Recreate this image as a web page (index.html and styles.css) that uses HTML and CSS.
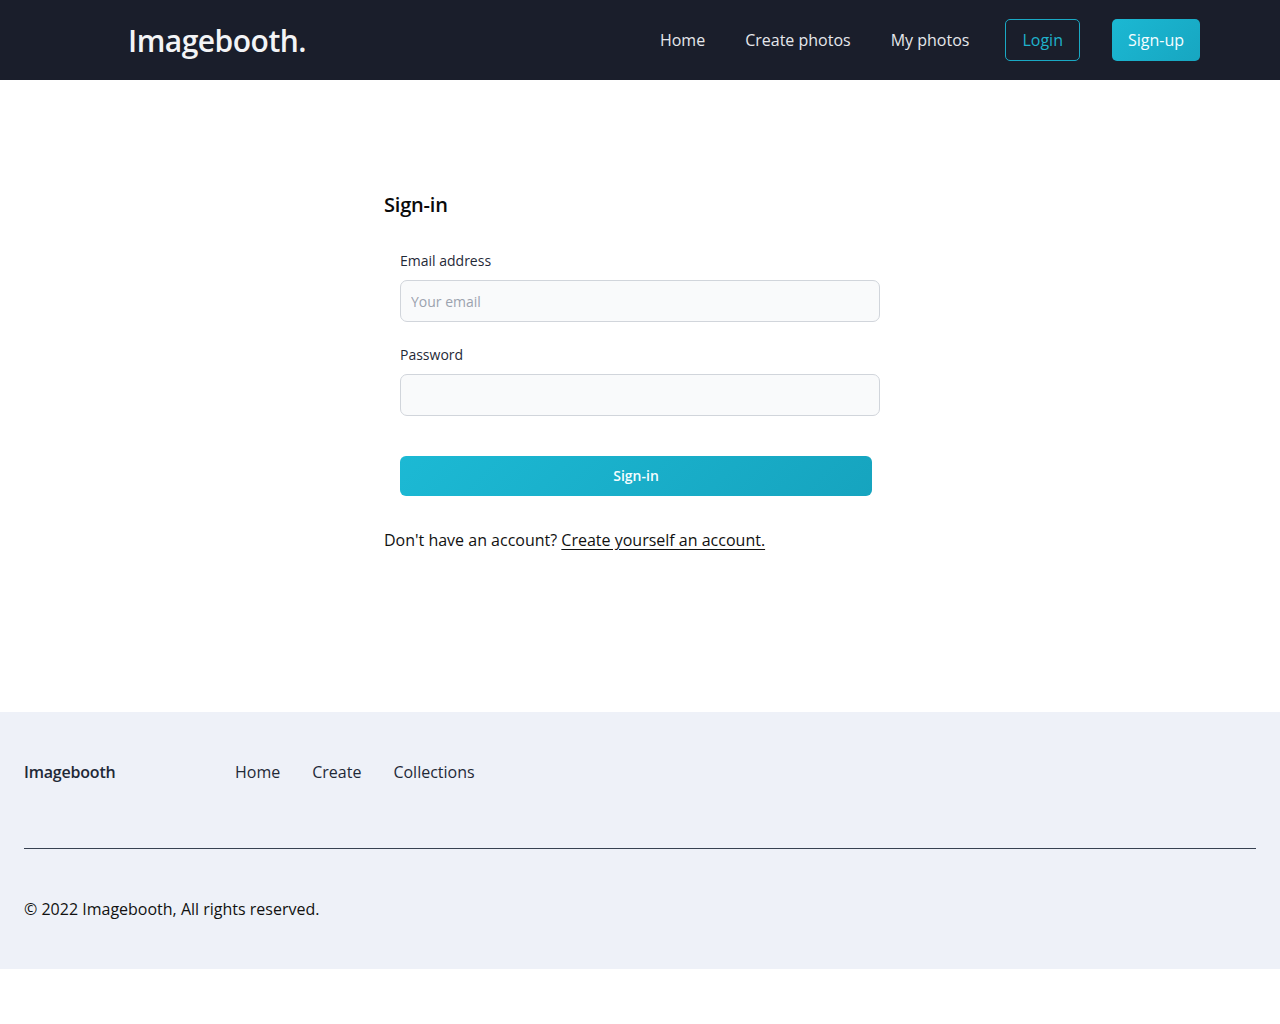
FILE: index.html
```html
<!DOCTYPE html>
<html lang="en">
<head>
  <meta charset="UTF-8">
  <meta name="viewport" content="width=device-width, initial-scale=1.0">
  <title>Imagebooth - Sign-in</title>
  <link rel="stylesheet" href="styles.css">
</head>
<body>
  <header class="navbar">
    <a class="brand" href="#">Imagebooth.</a>
    <nav class="nav-links">
      <a href="#">Home</a>
      <a href="#">Create photos</a>
      <a href="#">My photos</a>
    </nav>
    <div class="nav-actions">
      <a class="btn-outline" href="#">Login</a>
      <a class="btn-solid" href="#">Sign-up</a>
    </div>
  </header>

  <main class="main">
    <div class="signin">
      <h1 class="title">Sign-in</h1>
      <form class="form">
        <div class="field">
          <label for="email">Email address</label>
          <input id="email" type="email" placeholder="Your email">
        </div>
        <div class="field">
          <label for="password">Password</label>
          <input id="password" type="password">
        </div>
        <button class="btn-submit" type="button">Sign-in</button>
      </form>
      <p class="register">Don't have an account? <a href="#">Create yourself an account.</a></p>
    </div>
  </main>

  <footer class="footer">
    <div class="footer-top">
      <div class="footer-brand">Imagebooth</div>
      <nav class="footer-links">
        <a href="#">Home</a>
        <a href="#">Create</a>
        <a href="#">Collections</a>
      </nav>
    </div>
    <hr class="footer-line">
    <p class="copyright">© 2022 Imagebooth, All rights reserved.</p>
  </footer>
</body>
</html>
```

FILE: styles.css
```css
* {
  box-sizing: border-box;
}
body {
  margin: 0;
  font-family: "Open Sans", "Noto Sans", Arial, sans-serif;
  color: #111;
  background: #fff;
}
a {
  text-decoration: none;
  color: inherit;
}

/* header */
.navbar {
  height: 80px;
  background: #1a1e2b;
  display: flex;
  align-items: center;
  padding: 0 80px 0 128px;
}
.brand {
  font-size: 30px;
  font-weight: 600;
  color: #f3f4f6;
  letter-spacing: -0.5px;
}
.nav-links {
  margin-left: auto;
  display: flex;
  gap: 40px;
}
.nav-links a {
  font-size: 16px;
  color: #e5e7eb;
}
.nav-actions {
  display: flex;
  gap: 32px;
  margin-left: 36px;
}
.btn-outline,
.btn-solid {
  height: 42px;
  display: flex;
  align-items: center;
  padding: 0 16px;
  border-radius: 5px;
  font-size: 16px;
}
.btn-outline {
  border: 1px solid #1aa9c4;
  color: #1fb2cc;
}
.btn-solid {
  background: linear-gradient(135deg, #1bb8d3, #17a6c1);
  color: #f5fdff;
}

/* sign-in */
.main {
  padding: 111px 0 160px;
}
.signin {
  width: 512px;
  margin-left: 384px;
}
.title {
  margin: 0 0 32px;
  font-size: 20px;
  line-height: 28px;
  font-weight: 600;
  color: #0a0a0a;
  letter-spacing: -0.2px;
}
.form {
  padding: 0 16px;
}
.field {
  margin-bottom: 23px;
}
.field label {
  display: block;
  font-size: 14px;
  line-height: 20px;
  margin-bottom: 9px;
  color: #1f2937;
}
.field input {
  width: 480px;
  height: 42px;
  border: 1px solid #d1d5db;
  border-radius: 7px;
  background: #f9fafb;
  padding: 0 10px;
  font-family: inherit;
  font-size: 14px;
  color: #111;
}
.field input::placeholder {
  color: #9ca3af;
}
.btn-submit {
  display: block;
  width: 472px;
  height: 40px;
  margin-top: 40px;
  border: 0;
  border-radius: 6px;
  background: linear-gradient(135deg, #1cb9d4, #16a4bf);
  color: #f5fdff;
  font-family: inherit;
  font-size: 14px;
  font-weight: 600;
  line-height: 38px;
  padding: 0;
}
.register {
  margin: 32px 0 0;
  font-size: 16px;
  line-height: 24px;
  color: #111;
}
.register a {
  text-decoration: underline;
  text-underline-offset: 3px;
}

/* footer */
.footer {
  background: #eef1f8;
  padding: 48px 24px;
}
.footer-top {
  display: flex;
  align-items: center;
  line-height: 24px;
}
.footer-brand {
  width: 211px;
  font-size: 16px;
  font-weight: 600;
  color: #1f2937;
  letter-spacing: -0.2px;
}
.footer-links {
  display: flex;
  gap: 32px;
}
.footer-links a {
  font-size: 16px;
  color: #1f2937;
}
.footer-line {
  margin: 64px 0 48px;
  border: 0;
  border-top: 1px solid #374151;
}
.copyright {
  margin: 0;
  font-size: 16px;
  line-height: 24px;
  color: #111;
}
```
